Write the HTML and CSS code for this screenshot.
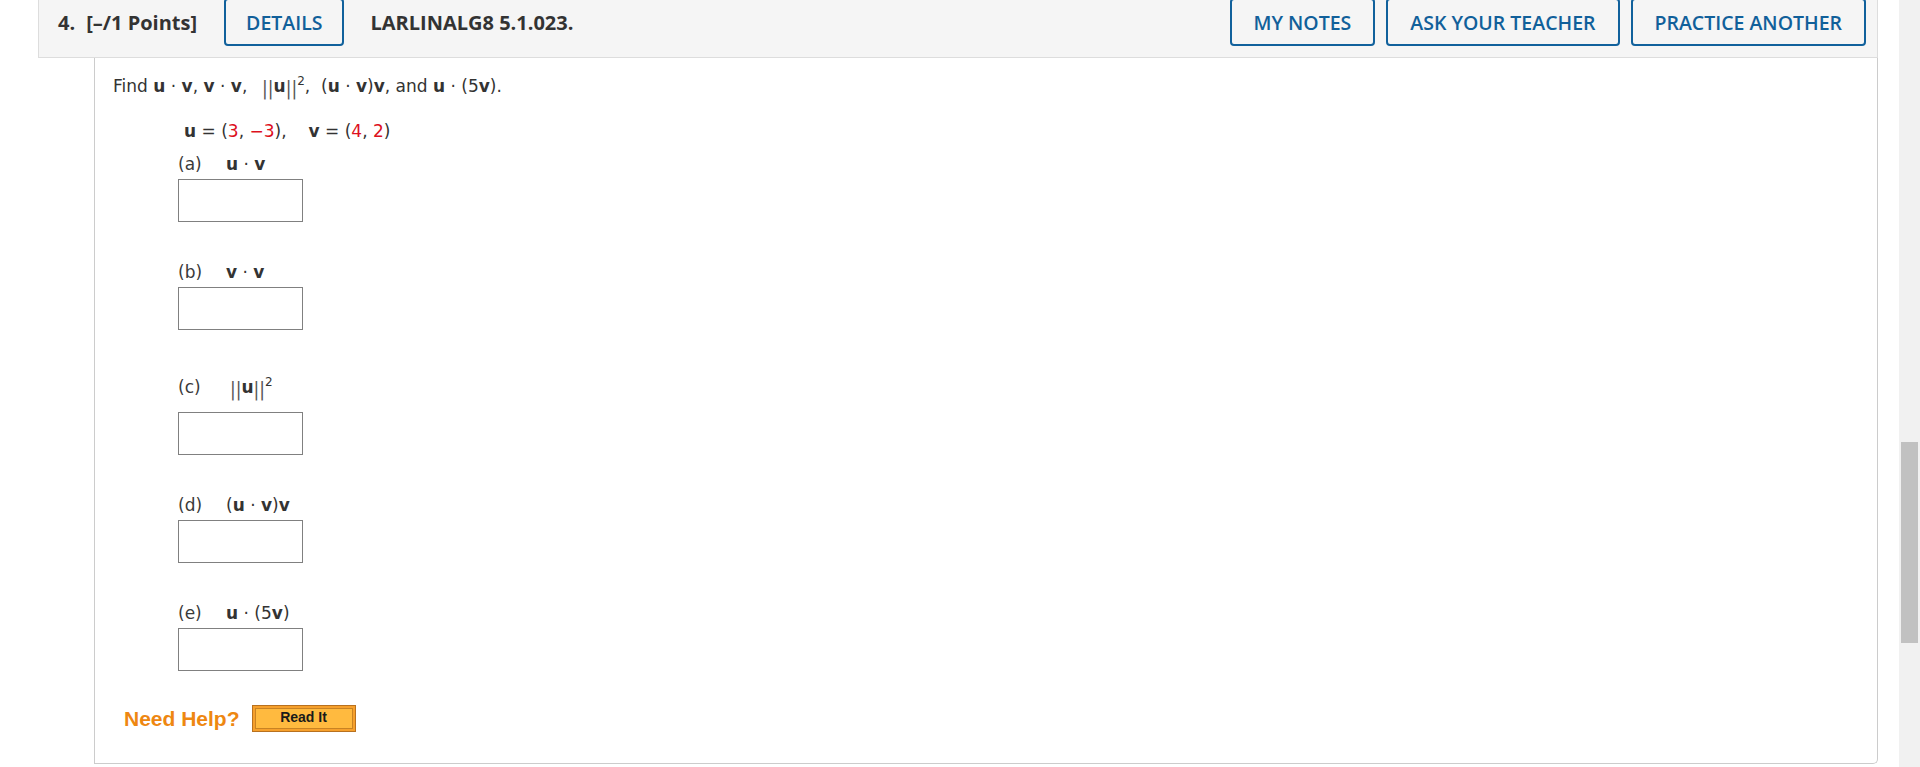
FILE: index.html
```html
<!DOCTYPE html>
<html lang="en">
<head>
<meta charset="utf-8">
<title>Question 4</title>
<link rel="stylesheet" href="styles.css">
</head>
<body>
<div class="page">
  <div class="question">
    <header class="qhead">
      <span class="qnum">4.</span>
      <span class="qpts">[–/1 Points]</span>
      <button class="btn btn-details">DETAILS</button>
      <span class="qcode">LARLINALG8 5.1.023.</span>
      <div class="actions">
        <button class="btn">MY NOTES</button>
        <button class="btn">ASK YOUR TEACHER</button>
        <button class="btn">PRACTICE ANOTHER</button>
      </div>
    </header>
    <section class="qbody">
      <p class="prompt">Find <b>u</b> · <b>v</b>, <b>v</b> · <b>v</b>,&nbsp; <span class="normgap"></span><span class="norm">||</span><b>u</b><span class="norm">||</span><sup>2</sup>,&nbsp; (<b>u</b> · <b>v</b>)<b>v</b>, and <b>u</b> · (5<b>v</b>).</p>
      <p class="given"><b>u</b> = (<span class="red">3</span>, <span class="red">−3</span>),<span class="gap"></span><b>v</b> = (<span class="red">4</span>, <span class="red">2</span>)</p>
      <div class="parts">
        <div class="part">
          <div class="plabel"><span class="pletter">(a)</span><b>u</b> · <b>v</b></div>
          <input class="answer" type="text">
        </div>
        <div class="part">
          <div class="plabel"><span class="pletter">(b)</span><b>v</b> · <b>v</b></div>
          <input class="answer" type="text">
        </div>
        <div class="part">
          <div class="plabel plabel-tall"><span class="pletter">(c)</span><span class="normgap"></span><span class="norm">||</span><b>u</b><span class="norm">||</span><sup>2</sup></div>
          <input class="answer" type="text">
        </div>
        <div class="part">
          <div class="plabel"><span class="pletter">(d)</span>(<b>u</b> · <b>v</b>)<b>v</b></div>
          <input class="answer" type="text">
        </div>
        <div class="part">
          <div class="plabel"><span class="pletter">(e)</span><b>u</b> · (5<b>v</b>)</div>
          <input class="answer" type="text">
        </div>
      </div>
      <div class="help">
        <span class="help-title">Need Help?</span>
        <button class="readit"><span class="readit-inner">Read It</span></button>
      </div>
    </section>
  </div>
  <div class="scrollbar"><div class="thumb"></div></div>
</div>
</body>
</html>
```

FILE: styles.css
```css
html, body {
  margin: 0;
  padding: 0;
  height: 100%;
  overflow: hidden;
  background: #ffffff;
}

.page {
  display: flex;
  height: 767px;
}

.question {
  flex: 1;
  padding-left: 38px;
  padding-right: 21px;
}

.scrollbar {
  width: 21px;
  background: #f1f1f1;
  padding-top: 442px;
  box-sizing: border-box;
}

.thumb {
  margin-left: 2px;
  width: 17px;
  height: 201px;
  background: #c1c1c1;
}

/* header */
.qhead {
  display: flex;
  align-items: center;
  margin-top: -10px;
  padding: 7px 11px 11px 19px;
  background: #f5f5f5;
  border: 1px solid #dddddd;
  font-family: "Open Sans", sans-serif;
  font-size: 20px;
  color: #333333;
}

.qnum,
.qpts,
.qcode {
  font-weight: 700;
}

.qpts {
  margin-left: 11px;
}

.btn {
  height: 48px;
  padding: 0 22px;
  border: 2px solid #11619c;
  border-radius: 4px;
  background: #f5f5f5;
  color: #11609a;
  font-family: "Open Sans", sans-serif;
  font-size: 19.5px;
  font-weight: 600;
  box-sizing: border-box;
}

.btn-details {
  margin: 0 26px 0 27px;
  padding: 0 20px;
}

.actions {
  margin-left: auto;
  display: flex;
  gap: 11px;
}

/* body */
.qbody {
  margin-left: 56px;
  padding: 18px 0 31px 18px;
  border: 1px solid #cccccc;
  border-top: none;
  border-radius: 0 0 5px 0;
  font-family: "DejaVu Sans", Verdana, sans-serif;
  font-size: 17px;
  color: #333333;
}

.prompt,
.given {
  margin: 0;
  line-height: 20px;
}

.given {
  margin-top: 25px;
  margin-left: 71px;
}

.gap {
  display: inline-block;
  width: 22px;
}

.red {
  color: #dd1020;
}

b {
  font-weight: 700;
}

.norm {
  font-weight: 400;
  color: #555555;
  display: inline-block;
  transform: translateY(2px) scaleY(1.15);
}

sup {
  font-size: 12px;
  line-height: 0;
  vertical-align: 7px;
}

.parts {
  margin-top: 13px;
  margin-left: 65px;
}

.part {
  margin-bottom: 40px;
}

.part:last-child {
  margin-bottom: 0;
}

.plabel {
  line-height: 20px;
  margin-bottom: 5px;
  white-space: nowrap;
}

.plabel-tall {
  padding-top: 7px;
  padding-bottom: 10px;
}

.pletter {
  display: inline-block;
  width: 48px;
  color: #3a3a3a;
}

.normgap {
  display: inline-block;
  width: 4px;
}

.answer {
  display: block;
  margin: 0;
  width: 125px;
  height: 43px;
  box-sizing: border-box;
  border: 1px solid #808080;
  background: #ffffff;
  padding: 0;
}

/* help */
.help {
  display: flex;
  align-items: center;
  margin-top: 34px;
  margin-left: 11px;
  height: 27px;
}

.help-title {
  font-family: "Liberation Sans", Arial, sans-serif;
  font-weight: 700;
  font-size: 21px;
  color: #ee8711;
}

.readit {
  margin-left: 12px;
  width: 104px;
  height: 27px;
  padding: 2px;
  box-sizing: border-box;
  border: 1px solid #b8711f;
  background: #f6a02c;
  display: flex;
}

.readit-inner {
  flex: 1;
  border: 1px solid #c98323;
  background: #ffba3f;
  font-family: "Liberation Sans", Arial, sans-serif;
  font-weight: 700;
  font-size: 14px;
  color: #1a1a1a;
  line-height: 17px;
  text-align: center;
}
```
